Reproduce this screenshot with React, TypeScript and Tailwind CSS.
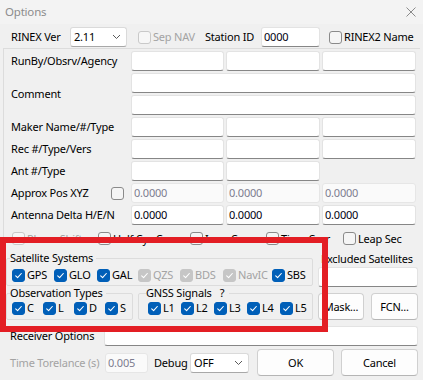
import React from "react";
import clsx from "clsx";

type CheckProps = {
  checked?: boolean;
  disabled?: boolean;
  label?: React.ReactNode;
  className?: string;
};

function Check({ checked, disabled, label, className }: CheckProps) {
  return (
    <div className={clsx("flex items-center", className)}>
      <span
        className={clsx(
          "w-[13px] h-[13px] rounded-[3px] border flex items-center justify-center shrink-0",
          checked && !disabled && "bg-[#005fb8] border-[#005fb8]",
          checked && disabled && "bg-[#c6c6c6] border-[#c6c6c6]",
          !checked && !disabled && "bg-[#f5f5f5] border-[#8a8a8a]",
          !checked && disabled && "bg-[#f7f7f7] border-[#c9c9c9]"
        )}
      >
        {checked && (
          <svg width="11" height="11" viewBox="0 0 11 11" fill="none">
            <path d="M2.7 5.8 L4.6 7.6 L8.3 3.5" stroke="#fff" strokeWidth="1.1" strokeLinecap="round" strokeLinejoin="round" />
          </svg>
        )}
      </span>
      {label && (
        <span className={clsx("ml-[2px] leading-[16px]", disabled ? "text-[#a3a3a3]" : "text-black")}>{label}</span>
      )}
    </div>
  );
}

function Field({ className, value, disabled }: { className?: string; value?: string; disabled?: boolean }) {
  return (
    <div
      className={clsx(
        "h-[20px] rounded-[3px] border px-[2px] flex items-center leading-[16px] shrink-0",
        disabled
          ? "bg-[#fafafa] border-[#e6e6e6] text-[#7d7d90]"
          : "bg-white border-[#e3e3e3] border-b-[#868686] text-[#000010]",
        className
      )}
    >
      {value}
    </div>
  );
}

function Combo({ className, value }: { className?: string; value: string }) {
  return (
    <div
      className={clsx(
        "h-[20px] rounded-[3px] border border-[#dadada] border-b-[#a8a8a8] bg-white pl-[3px] pr-[5px] flex items-center justify-between shrink-0",
        className
      )}
    >
      <span className="leading-[16px]">{value}</span>
      <svg width="9" height="6" viewBox="0 0 9 6" fill="none">
        <path d="M1 1 L4.5 4.5 L8 1" stroke="#5a5a5a" strokeWidth="1" />
      </svg>
    </div>
  );
}

function Button({ className, children }: { className?: string; children: React.ReactNode }) {
  return (
    <div
      className={clsx(
        "h-[27px] rounded-[4px] border border-[#d0d0d0] border-b-[#b5b5b5] bg-[#fdfdfd] flex items-center justify-center shrink-0 leading-[16px]",
        className
      )}
    >
      {children}
    </div>
  );
}

const threeRows = ["Maker Name/#/Type", "Rec #/Type/Vers"];

const satellites = [
  { name: "GPS", w: "w-[42px]", on: true },
  { name: "GLO", w: "w-[43px]", on: true },
  { name: "GAL", w: "w-[41px]", on: true },
  { name: "QZS", w: "w-[42px]", off: true },
  { name: "BDS", w: "w-[43px]", off: true },
  { name: "NavIC", w: "w-[49px]", off: true },
  { name: "SBS", w: "", on: true },
];

export default function App() {
  return (
    <div className="relative w-[423px] h-[380px] overflow-hidden whitespace-nowrap bg-[#f0f0f0] text-[11px] text-black font-['Noto_Sans','DejaVu_Sans',sans-serif] tracking-[-0.2px]">
      {/* title bar */}
      <div className="h-[24px] bg-[#f3f3f3] flex items-center justify-between pl-[5px] pr-[7px]">
        <span className="text-[#8c8c8c] leading-[16px] text-[11.5px]">Options</span>
        <svg width="10" height="10" viewBox="0 0 10 10" fill="none">
          <path d="M0.5 0.5 L9.5 9.5 M9.5 0.5 L0.5 9.5" stroke="#8a8a8a" strokeWidth="1" />
        </svg>
      </div>

      {/* first row */}
      <div className="mt-[3px] h-[20px] flex items-center">
        <span className="pl-[11px] w-[70px] leading-[16px]">RINEX Ver</span>
        <Combo className="w-[57px]" value="2.11" />
        <Check className="ml-[11px] w-[67px]" disabled label="Sep NAV" />
        <span className="w-[56px] leading-[16px]">Station ID</span>
        <Field className="w-[59px]" value="0000" />
        <Check className="ml-[9px]" label="RINEX2 Name" />
      </div>

      {/* header panel */}
      <div className="mx-[3px] mt-[1px] border-l border-t border-[#dcdcdc] pt-[2px] pb-[4px]">
        <div className="flex flex-col gap-[2px]">
          <div className="flex items-center h-[20px]">
            <span className="pl-[7px] w-[127px] leading-[16px]">RunBy/Obsrv/Agency</span>
            <div className="flex gap-[2px]">
              <Field className="w-[93px]" />
              <Field className="w-[94px]" />
              <Field className="w-[94px]" />
            </div>
          </div>
          <div className="flex">
            <span className="pl-[7px] w-[127px] flex items-center leading-[16px]">Comment</span>
            <div className="flex flex-col gap-[2px]">
              <Field className="w-[285px]" />
              <Field className="w-[285px]" />
            </div>
          </div>
          {threeRows.map((l) => (
            <div key={l} className="flex items-center h-[20px]">
              <span className="pl-[7px] w-[127px] leading-[16px]">{l}</span>
              <div className="flex gap-[2px]">
                <Field className="w-[93px]" />
                <Field className="w-[94px]" />
                <Field className="w-[94px]" />
              </div>
            </div>
          ))}
          <div className="flex items-center h-[20px]">
            <span className="pl-[7px] w-[127px] leading-[16px]">Ant #/Type</span>
            <div className="flex gap-[2px]">
              <Field className="w-[93px]" />
              <Field className="w-[94px]" />
            </div>
          </div>
          <div className="flex items-center h-[20px]">
            <span className="pl-[7px] w-[107px] leading-[16px]">Approx Pos XYZ</span>
            <Check />
            <span className="w-[7px]" />
            <div className="flex gap-[2px]">
              <Field className="w-[93px]" value="0.0000" disabled />
              <Field className="w-[94px]" value="0.0000" disabled />
              <Field className="w-[94px]" value="0.0000" disabled />
            </div>
          </div>
          <div className="flex items-center h-[20px]">
            <span className="pl-[7px] w-[127px] leading-[16px]">Antenna Delta H/E/N</span>
            <div className="flex gap-[2px]">
              <Field className="w-[93px]" value="0.0000" />
              <Field className="w-[94px]" value="0.0000" />
              <Field className="w-[94px]" value="0.0000" />
            </div>
          </div>
        </div>
        <div className="mt-[7px] h-[13px] flex items-center pl-[8px]">
          <Check className="w-[86px]" disabled label="Phase Shift" />
          <Check className="w-[92px]" label="Half Cyc Corr" />
          <Check className="w-[76px]" label="Iono Corr" />
          <Check className="w-[77px]" label="Time Corr" />
          <Check label="Leap Sec" />
        </div>
      </div>

      {/* lower section */}
      <div className="flex pl-[6px]">
        <div className="w-[307px]">
          <fieldset className="mt-[2px] border border-[#dcdcdc] rounded-[2px] px-[5px] pb-[2px]">
            <legend className="-ml-[2px] pr-[3px] leading-[14px]">Satellite Systems</legend>
            <div className="mt-[2px] h-[16px] flex items-center">
              {satellites.map((s) => (
                <Check key={s.name} className={s.w} checked disabled={s.off} label={s.name} />
              ))}
            </div>
          </fieldset>
          <div className="flex">
            <fieldset className="w-[127px] border border-[#dcdcdc] rounded-[2px] px-[5px] pb-[3px]">
              <legend className="-ml-[2px] pr-[3px] leading-[14px]">Observation Types</legend>
              <div className="h-[16px] flex items-center">
                <Check className="w-[31px]" checked label="C" />
                <Check className="w-[31px]" checked label="L" />
                <Check className="w-[31px]" checked label="D" />
                <Check checked label="S" />
              </div>
            </fieldset>
            <fieldset className="ml-[5px] w-[175px] border border-[#dcdcdc] rounded-[2px] pl-[9px] pb-[3px]">
              <legend className="-ml-[2px] pr-[5px] leading-[14px]">
                GNSS Signals<span className="ml-[8px]">?</span>
              </legend>
              <div className="h-[16px] flex items-center">
                <Check className="w-[33px]" checked label="L1" />
                <Check className="w-[33px]" checked label="L2" />
                <Check className="w-[33px]" checked label="L3" />
                <Check className="w-[33px]" checked label="L4" />
                <Check checked label="L5" />
              </div>
            </fieldset>
          </div>
        </div>
        <div className="ml-[5px] w-[100px]">
          <div className="mt-[2px] pl-[3px] leading-[16px] h-[16px]">Excluded Satellites</div>
          <Field className="w-[100px]" />
          <div className="mt-[6px] flex">
            <Button className="w-[46px]">Mask...</Button>
            <Button className="ml-[7px] w-[47px]">FCN...</Button>
          </div>
        </div>
      </div>

      <div className="mt-[6px] h-[20px] flex items-center">
        <span className="pl-[10px] w-[104px] leading-[16px]">Receiver Options</span>
        <Field className="w-[314px]" />
      </div>

      <div className="mt-[3px] h-[27px] flex items-center">
        <span className="pl-[10px] w-[105px] leading-[16px] text-[#a3a3a3]">Time Torelance (s)</span>
        <Field className="w-[43px]" value="0.005" disabled />
        <span className="ml-[6px] w-[36px] leading-[16px]">Debug</span>
        <Combo className="w-[59px]" value="OFF" />
        <Button className="ml-[8px] w-[77px]">OK</Button>
        <Button className="ml-[7px] w-[77px]">Cancel</Button>
      </div>

      {/* annotation */}
      <div className="absolute left-0 top-[237px] w-[328px] h-[95px] border-[6px] border-[#e31e24] pointer-events-none" />
    </div>
  );
}
